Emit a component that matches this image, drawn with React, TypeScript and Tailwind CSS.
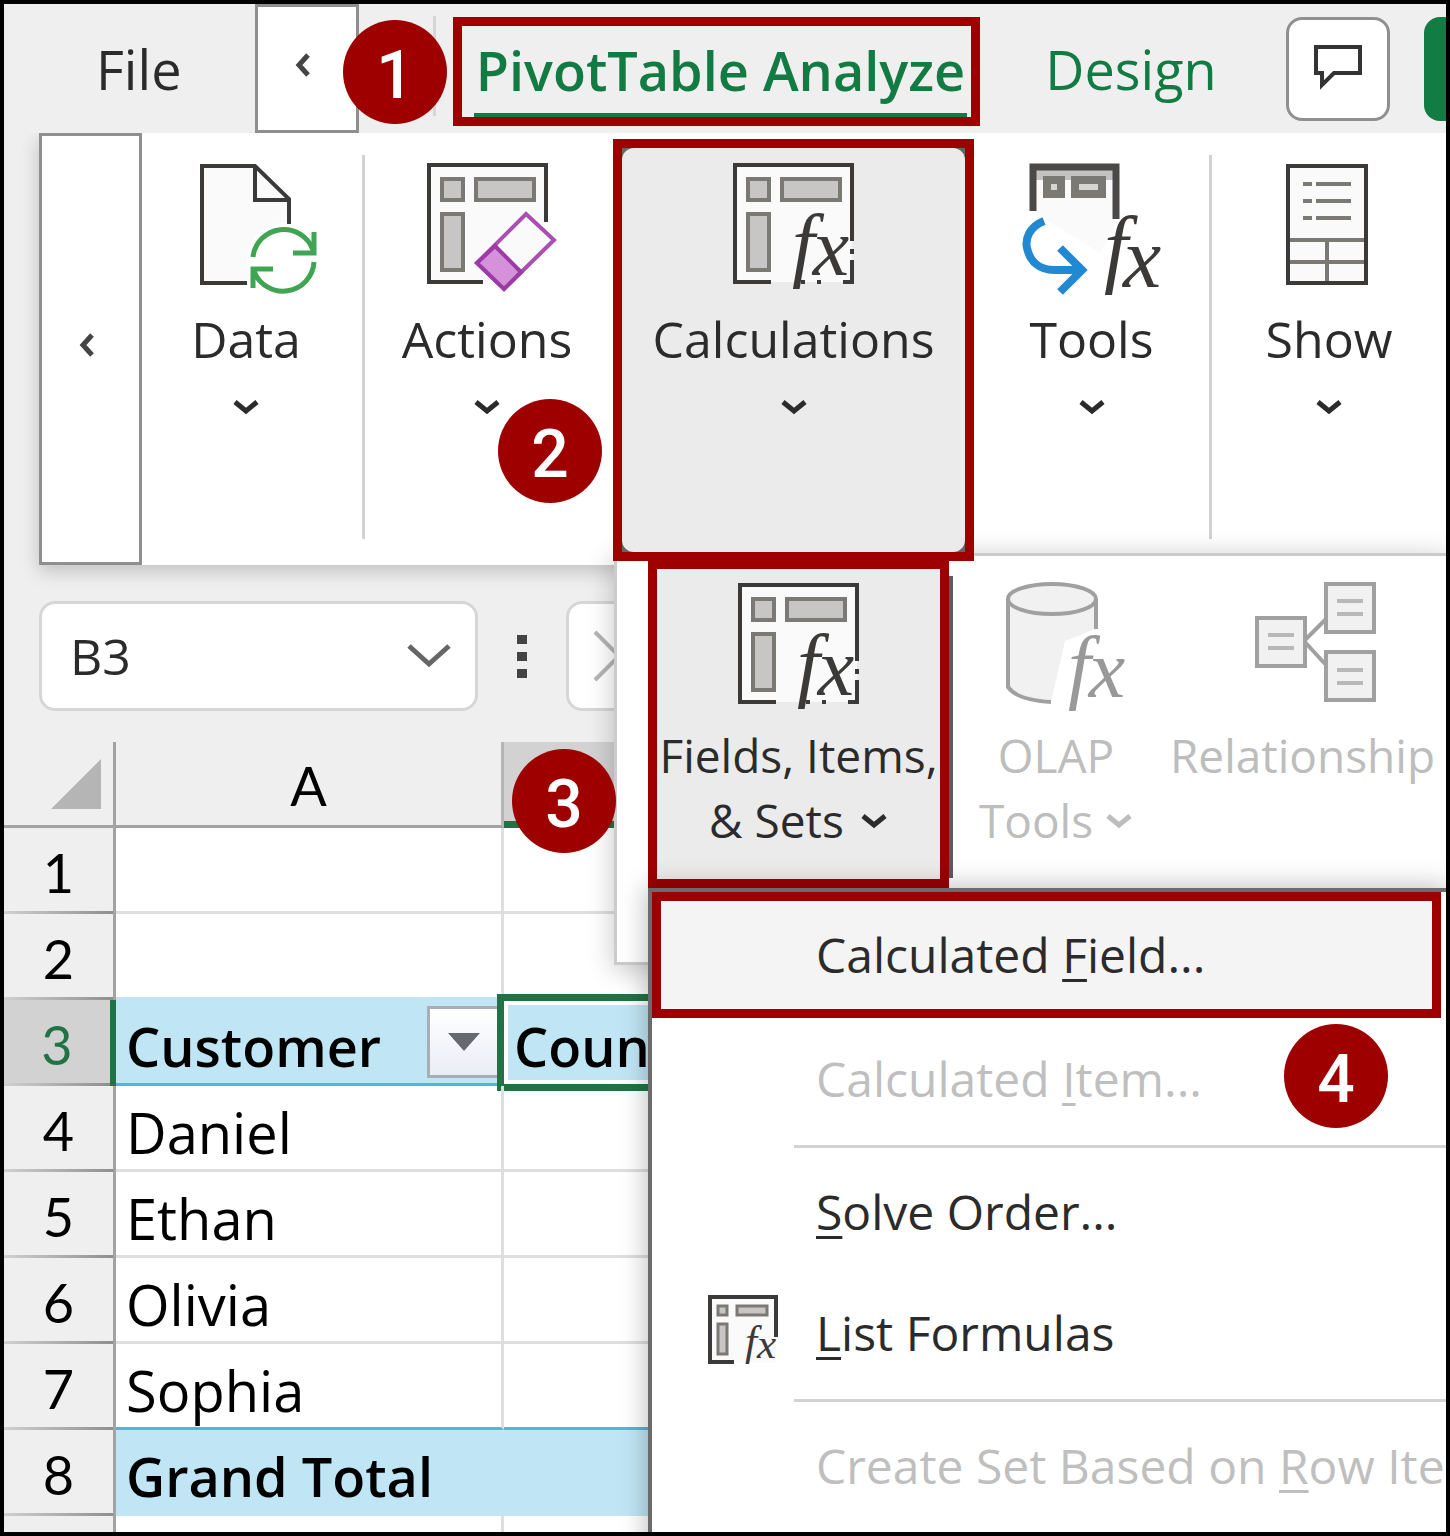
import React from 'react';
import { clsx } from 'clsx';

const rows = [
  { id: 1, customer: '' },
  { id: 2, customer: '' },
  { id: 3, customer: 'Customer' },
  { id: 4, customer: 'Daniel' },
  { id: 5, customer: 'Ethan' },
  { id: 6, customer: 'Olivia' },
  { id: 7, customer: 'Sophia' },
  { id: 8, customer: 'Grand Total' },
];

export default function App() {
  return (
    <div className="h-screen overflow-hidden border-4 border-black bg-[#efefef] font-['Open_Sans',sans-serif] text-[#2b2b2b]">
      <TabStrip />
      <Ribbon />
      <FormulaBar />
      <Sheet />
    </div>
  );
}

function TabStrip() {
  return (
    <div className="flex h-[129px] items-start whitespace-nowrap text-[54px] leading-[60px]">
      <button className="h-full w-[251px] pl-[92px] text-left">File</button>
      <button
        aria-label="Scroll tabs left"
        className="flex h-full w-[104px] items-center justify-center border-[3px] border-[#8f8f8f] bg-white pb-2 pr-2"
      >
        <ScrollArrow />
      </button>
      <div className="relative mt-3 h-[100px] w-[94px]">
        <Step n={1} className="-left-4 top-1" />
        <div className="ml-[74px] h-full w-[3px] bg-[#d6d6d6]" />
      </div>
      <button className="mt-[13px] h-[109px] w-[527px] border-[9px] border-[#9e0000] pl-3 pr-1 font-semibold text-[#127a43]">
        <span className="flex h-full items-center justify-center border-b-4 border-[#127a43]">PivotTable Analyze</span>
      </button>
      <button className="h-full w-[302px] text-[#127a43]">Design</button>
      <div className="mt-[13px] ml-auto flex gap-[34px]">
        <button
          aria-label="Comments"
          className="flex h-[104px] w-[104px] items-center justify-center rounded-2xl border-[3px] border-[#8f8f8f] bg-white"
        >
          <CommentIcon />
        </button>
        <button aria-label="Share" className="h-[104px] w-[22px] rounded-l-2xl bg-[#127d43]" />
      </div>
    </div>
  );
}

function Ribbon() {
  return (
    <div className="relative z-10 ml-[35px] flex h-[432px] bg-white shadow-[0_6px_18px_0_rgba(0,0,0,0.2)] [clip-path:inset(0_0_-1000px_-40px)]">
      <button
        aria-label="Scroll ribbon left"
        className="flex w-[103px] items-center justify-center border-[3px] border-[#8f8f8f] pb-2 pr-2"
      >
        <ScrollArrow />
      </button>
      <RibbonButton label="Data" icon={<DataIcon />} className="w-[208px]" />
      <Divider className="ml-3" />
      <div className="relative flex w-[248px]">
        <RibbonButton label="Actions" icon={<ActionsIcon />} className="w-[244px]" />
        <Step n={2} className="right-[11px] top-[266px]" />
      </div>
      <button className="relative z-20 mt-[6px] h-[422px] w-[361px] border-[9px] border-[#9e0000] bg-[#666]">
        <span className="flex h-full flex-col items-center rounded-xl bg-[#ebebeb] pt-[13px]">
          <PivotFxIcon />
          <span className="text-[50px] leading-[60px]">Calculations</span>
          <Chevron className="mt-[30px]" />
        </span>
      </button>
      <RibbonButton label="Tools" icon={<ToolsIcon />} className="w-[235px]" />
      <Divider />
      <RibbonButton label="Show" icon={<ShowIcon />} className="min-w-0 flex-1" />
      <CalculationsFlyout />
    </div>
  );
}

function RibbonButton({ label, icon, className }: { label: string; icon: React.ReactNode; className: string }) {
  return (
    <button className={clsx('flex flex-col items-center pt-7', className)}>
      {icon}
      <span className="text-[50px] leading-[60px]">{label}</span>
      <Chevron className="mt-[30px]" />
    </button>
  );
}

// Opens under the Calculations group and holds the second level menu
function CalculationsFlyout() {
  return (
    <div className="absolute left-[575px] right-0 top-[420px] h-[412px] border-[3px] border-r-0 border-[#cbcbcb] bg-white shadow-[0_4px_24px_2px_rgba(0,0,0,0.2)]">
      <div className="flex whitespace-nowrap pl-[31px] pt-1 text-[46px] leading-[65px]">
        <button className="flex h-[328px] w-[301px] flex-col items-center border-[9px] border-[#9e0000] bg-[#ebebeb] pt-3">
          <PivotFxIcon />
          <span className="-mt-[6px]">Fields, Items,</span>
          <span className="flex items-center gap-4">
            &amp; Sets
            <Chevron />
          </span>
        </button>
        <div className="mt-4 h-[302px] w-1 bg-[#5c5c5c]" />
        <button disabled className="flex w-[206px] flex-col items-center pt-[21px] text-[#bdbdbd]">
          <OlapIcon />
          <span className="-mt-[6px]">OLAP</span>
          <span className="flex items-center gap-3">
            Tools
            <Chevron />
          </span>
        </button>
        <button disabled className="flex min-w-0 flex-1 flex-col items-center pt-[21px] text-[#bdbdbd]">
          <RelationshipIcon />
          <span className="-mt-[6px]">Relationship</span>
        </button>
      </div>
      <FieldsMenu />
    </div>
  );
}

function FieldsMenu() {
  return (
    <div
      role="menu"
      className="absolute left-[31px] right-0 top-[332px] border-l-4 border-t-4 border-[#6b6b6b] bg-white pb-10 shadow-[0_0_24px_2px_rgba(0,0,0,0.25)]"
    >
      <div className="relative pr-[5px]">
        <MenuItem className="h-[126px] bg-[#f4f4f4] shadow-[inset_0_0_0_9px_#9e0000]">
          Calculated <Key>F</Key>ield...
        </MenuItem>
        <Step n={4} className="right-[58px] top-[132px]" />
      </div>
      <MenuItem disabled className="h-[121px]">
        Calculated <Key>I</Key>tem...
      </MenuItem>
      <Separator />
      <MenuItem className="h-[121px]">
        <Key>S</Key>olve Order...
      </MenuItem>
      <MenuItem className="h-[121px]" icon={<ListFormulasIcon />}>
        <Key>L</Key>ist Formulas
      </MenuItem>
      <Separator />
      <MenuItem disabled className="h-[121px]">
        Create Set Based on <Key>R</Key>ow Ite
      </MenuItem>
    </div>
  );
}

interface MenuItemProps {
  children: React.ReactNode;
  className: string;
  icon?: React.ReactNode;
  disabled?: boolean;
}

function MenuItem({ children, className, icon, disabled }: MenuItemProps) {
  return (
    <button
      role="menuitem"
      disabled={disabled}
      className={clsx(
        'flex w-full items-center whitespace-nowrap pl-14 text-left text-[48px] leading-[60px]',
        disabled && 'text-[#bfbfbf]',
        className
      )}
    >
      <span className="mr-[38px] w-[70px] shrink-0">{icon}</span>
      <span>{children}</span>
    </button>
  );
}

function Key({ children }: { children: React.ReactNode }) {
  return <span className="underline decoration-[3px] underline-offset-[6px]">{children}</span>;
}

function Separator() {
  return <div className="mb-[3px] ml-[142px] mt-[6px] h-[3px] bg-[#d2d2d2]" />;
}

function FormulaBar() {
  return (
    <div className="flex h-[177px] items-start gap-[39px] pl-[35px] pt-9">
      <div className="flex h-[110px] w-[439px] items-center rounded-2xl border-[3px] border-[#d6d6d6] bg-white pl-7 pr-6">
        <input
          type="text"
          aria-label="Name box"
          defaultValue="B3"
          className="h-20 min-w-0 flex-1 text-[50px] outline-none"
        />
        <svg viewBox="0 0 44 24" className="h-6 w-11" fill="none" stroke="#666" strokeWidth="5">
          <path d="M2 2 L22 20 L42 2" />
        </svg>
      </div>
      <div className="flex h-[110px] w-[10px] flex-col justify-center gap-2">
        <span className="h-[9px] bg-[#444]" />
        <span className="h-[9px] bg-[#444]" />
        <span className="h-[9px] bg-[#444]" />
      </div>
      <div className="flex h-[110px] flex-1 items-center rounded-2xl border-[3px] border-[#d6d6d6] bg-white pl-6">
        <button aria-label="Cancel" disabled>
          <svg viewBox="0 0 52 52" className="size-13" fill="none" stroke="#b5b5b5" strokeWidth="4">
            <path d="M2 2 L50 50 M50 2 L2 50" />
          </svg>
        </button>
      </div>
    </div>
  );
}

function Sheet() {
  return (
    <table className="w-full table-fixed border-separate border-spacing-0 bg-white text-[56px] leading-[60px] text-black">
      <colgroup>
        <col className="w-[112px]" />
        <col className="w-[388px]" />
        <col />
      </colgroup>
      <thead>
        <tr className="h-[86px] bg-[#efefef]">
          <th className="border-b-[3px] border-r-[3px] border-[#a3a3a3] pr-3">
            <svg viewBox="0 0 50 50" className="ml-auto size-[50px]" fill="#b5b5b5">
              <path d="M50 0 V50 H0 Z" />
            </svg>
          </th>
          <th className="border-b-[3px] border-r-[3px] border-b-[#a3a3a3] border-r-[#b5b5b5] pt-1 font-['Lato',sans-serif] text-[54px] font-normal">
            A
          </th>
          <th className="relative border-b-[7px] border-[#217346] bg-[#d2d2d2] p-0">
            <Step n={3} className="left-2 top-[7px]" />
          </th>
        </tr>
      </thead>
      <tbody>
        {rows.map((row) => (
          <SheetRow key={row.id} id={row.id} customer={row.customer} />
        ))}
        <tr className="h-[86px]">
          <th className="border-r-[3px] border-[#a3a3a3] bg-[#efefef]" />
          <td className="border-r-[3px] border-[#dedede]" />
          <td />
        </tr>
      </tbody>
    </table>
  );
}

function SheetRow({ id, customer }: { id: number; customer: string }) {
  const filled = id === 3 || id === 8;
  const accentLine = id === 3 || id === 7;
  const cell = clsx(
    'relative border-b-[3px] p-0 pl-[10px]',
    filled && 'bg-[#c0e6f5] text-[54px] font-semibold',
    accentLine ? 'border-b-[#4db7e0]' : id === 2 || id === 8 ? 'border-b-[#c0e6f5]' : 'border-b-[#dedede]'
  );

  return (
    <tr className="h-[86px]">
      <th
        className={clsx(
          "border-r-[3px] bg-[linear-gradient(to_right,#d0d0d0,#8e8e8e)] bg-[length:100%_3px] bg-bottom bg-no-repeat p-0 pt-1 font-['Lato',sans-serif] text-[54px] font-normal",
          id === 3 ? 'border-r-[6px] border-[#217346] bg-[#d2d2d2] text-[#217346]' : 'border-[#a3a3a3] bg-[#efefef]'
        )}
      >
        {id}
      </th>
      <td className={clsx(cell, 'border-r-[3px]', filled ? 'border-r-[#c0e6f5]' : 'border-r-[#dedede]')}>
        <div className="flex items-center justify-between">
          <span className="pt-2">{customer}</span>
          {id === 3 && (
            <button
              aria-label="Filter customers"
              className="flex h-[72px] w-[74px] items-center justify-center border-[3px] border-[#a9adb5] bg-linear-to-b from-white to-[#e9edf5]"
            >
              <svg viewBox="0 0 32 18" className="h-[18px] w-8" fill="#666a70">
                <path d="M0 0 H32 L16 18 Z" />
              </svg>
            </button>
          )}
        </div>
      </td>
      <td className={cell}>
        {id === 3 && (
          <>
            <div className="pt-2">Count</div>
            <span className="absolute -bottom-2 -left-[7px] -top-[6px] right-0 border-[7px] border-[#217346] shadow-[inset_0_0_0_4px_#fff]" />
          </>
        )}
      </td>
    </tr>
  );
}

function Step({ n, className }: { n: number; className: string }) {
  return (
    <span
      className={clsx(
        "absolute z-30 flex size-[104px] items-center justify-center rounded-full bg-[#9e0000] pt-2 font-['Roboto',sans-serif] text-[66px] leading-none font-medium text-white",
        className
      )}
    >
      {n}
    </span>
  );
}

function Divider({ className }: { className?: string }) {
  return <div className={clsx('mt-[22px] h-[384px] w-[3px] bg-[#d2d2d2]', className)} />;
}

function Chevron({ className }: { className?: string }) {
  return (
    <svg viewBox="0 0 28 16" className={clsx('h-4 w-7', className)} fill="none" stroke="currentColor" strokeWidth="5">
      <path d="M3 3 L14 12 L25 3" />
    </svg>
  );
}

function ScrollArrow() {
  return (
    <svg viewBox="0 0 16 24" className="h-6 w-4" fill="none" stroke="#444" strokeWidth="5">
      <path d="M13 2 L4 12 L13 22" />
    </svg>
  );
}

function CommentIcon() {
  return (
    <svg viewBox="0 0 50 46" className="mb-1 h-[46px] w-[50px]" fill="none" stroke="#333" strokeWidth="4">
      <path d="M3 3 H47 V29 H21 L9 41 V29 H3 Z" />
    </svg>
  );
}

// The three grey field blocks of a pivot table
function PivotBlocks() {
  return (
    <g fill="#c8c6c4" stroke="#7a7974" strokeWidth="4">
      <path d="M15 16 H36 V37 H15 Z M49 16 H107 V37 H49 Z M15 51 H36 V107 H15 Z" />
    </g>
  );
}

interface FxProps {
  x: number;
  y: number;
  size: number;
  dx: number;
  dy: number;
  fill?: string;
}

// Function sign: the x sits a little lower than the f.
function Fx({ x, y, size, dx, dy, fill = '#3b3a39' }: FxProps) {
  return (
    <text
      x={x - size / 4}
      y={y}
      fontFamily="Liberation Serif, serif"
      fontStyle="italic"
      fontSize={size}
      fill={fill}
      stroke="none"
    >
      {'\u00a0f'}
      <tspan dx={dx} dy={dy}>
        x
      </tspan>
    </text>
  );
}

function PivotFxIcon() {
  return (
    <svg viewBox="-3 -2 128 148" className="h-[148px] w-[128px]" fill="none">
      <path d="M2 2 H119 V119 H2 Z" fill="#fafafa" />
      <path d="M38 119 H2 V2 H119 V78 M119 86 V91 M119 97 V119 H110 M84 119 H88 M68 119 H72" stroke="#3b3a39" strokeWidth="4" />
      <PivotBlocks />
      <Fx x={59} y={108} size={82} dx={-2} dy={4} />
    </svg>
  );
}

function ListFormulasIcon() {
  return (
    <svg viewBox="0 0 70 76" className="h-[76px] w-[70px]" fill="none">
      <path d="M2 2 H68 V68 H2 Z" fill="#fafafa" />
      <path d="M26 67 H2 V2 H68 V42" stroke="#3b3a39" strokeWidth="4" />
      <path d="M10 11 H19 V20 H10 Z M29 11 H59 V20 H29 Z M10 29 H19 V59 H10 Z" fill="#c8c6c4" stroke="#7a7974" strokeWidth="3" />
      <Fx x={37} y={60} size={43} dx={0} dy={3} />
    </svg>
  );
}

function DataIcon() {
  return (
    <svg viewBox="-8 -2 130 148" className="ml-5 h-[148px] w-[130px]" fill="none">
      <path d="M2 2 H56 L90 36 V70 L58 119 H2 Z" fill="#fafafa" />
      <circle cx="85" cy="97" r="37" fill="#fff" />
      <path d="M48 120 H3 V3 H56 L90 36 V61 M56 3 V37 H90" stroke="#3b3a39" strokeWidth="4" />
      <g stroke="#3fa552" strokeWidth="5">
        <path d="M54 94 A31 31 0 0 1 114 87 M115 69 V90 H94" />
        <path d="M115 99 A31 31 0 0 1 55 108 M54 125 V106 H74" />
      </g>
    </svg>
  );
}

function ActionsIcon() {
  return (
    <svg viewBox="-3 -2 134 148" className="ml-2 h-[148px] w-[134px]" fill="none">
      <path d="M2 2 H119 V60 L60 119 H2 Z" fill="#fafafa" />
      <path d="M56 119 H2 V2 H119 V59" stroke="#3b3a39" strokeWidth="4" />
      <PivotBlocks />
      <path d="M99 51 L127 77 L77 126 L50 100 Z" fill="#fafafa" stroke="#a94fb0" strokeWidth="4" />
      <path d="M68 83 L94 109 L77 126 L50 100 Z" fill="#d592db" stroke="#9c3ba5" strokeWidth="4" />
    </svg>
  );
}

function ToolsIcon() {
  return (
    <svg viewBox="0 0 144 148" className="h-[148px] w-[144px]" fill="none">
      <path d="M12 4 H98 V60 L80 92 L34 64 L12 48 Z" fill="#fafafa" />
      <path d="M14 14 H96" stroke="#c3c2c0" strokeWidth="10" />
      <path d="M13 50 V6 H96 V58" stroke="#4a4948" strokeWidth="7" />
      <path d="M27 19 H41 V33 H27 Z M55 19 H82 V33 H55 Z" fill="#d6d5d3" stroke="#7a7974" strokeWidth="8" />
      <path d="M24 60 C9 66 5 78 7 87 C10 101 20 109 34 109 H62 M40 87 L62 109 L40 131" stroke="#2089d2" strokeWidth="8" />
      <Fx x={84} y={115} size={86} dx={-5} dy={11} />
    </svg>
  );
}

function ShowIcon() {
  return (
    <svg viewBox="0 -2 84 148" className="mr-1 h-[148px] w-[84px]" fill="none">
      <path d="M3 3 H81 V120 H3 Z" fill="#fafafa" />
      <g stroke="#7a7974" strokeWidth="4">
        <path d="M18 21 H27 M31 21 H66 M18 38 H27 M31 38 H66 M18 55 H27 M31 55 H66" />
        <path d="M3 77 H81 M3 99 H81 M42 77 V121" />
      </g>
      <path d="M3 3 H81 V120 H3 Z" stroke="#3b3a39" strokeWidth="4" />
    </svg>
  );
}

function OlapIcon() {
  return (
    <svg viewBox="0 0 122 148" className="ml-5 h-[148px] w-[122px]" fill="none">
      <path d="M3 18 V106 C10 116 30 120 46 121 L60 60 L90 48 V18 Z" fill="#f1f1f1" />
      <g stroke="#a0a0a0" strokeWidth="4">
        <ellipse cx="47" cy="18" rx="44" ry="15" fill="#f1f1f1" />
        <path d="M3 18 V106 C10 116 28 120 46 121 M91 18 V48" />
      </g>
      <Fx x={63} y={112} size={82} dx={-2} dy={4} fill="#999" />
    </svg>
  );
}

function RelationshipIcon() {
  return (
    <svg viewBox="-26 0 150 148" className="h-[148px] w-[150px]" stroke="#a0a0a0" strokeWidth="4" fill="#f1f1f1">
      <path d="M50 60 L72 38 M50 60 L72 84" />
      <path d="M3 37 H51 V85 H3 Z M72 3 H120 V51 H72 Z M72 71 H120 V119 H72 Z" />
      <path d="M14 54 H40 M14 67 H40 M83 20 H109 M83 33 H109 M83 89 H109 M83 102 H109" stroke="#b8b8b8" />
    </svg>
  );
}
